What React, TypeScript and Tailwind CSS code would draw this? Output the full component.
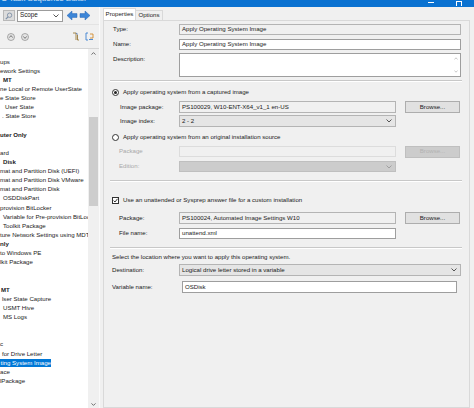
import React from 'react';

const treeRows: { t: string; x?: number; b?: boolean; sel?: boolean }[] = [
  { t: 'ups' },
  { t: 'ework Settings' },
  { t: 'MT', x: 3, b: true },
  { t: 'ne Local or Remote UserState' },
  { t: 'e State Store' },
  { t: 'User State', x: 5 },
  { t: '. State Store', x: 2 },
  { t: '' },
  { t: 'uter Only', b: true },
  { t: '' },
  { t: 'ard' },
  { t: 'Disk', x: 3, b: true },
  { t: 'mat and Partition Disk (UEFI)' },
  { t: 'mat and Partition Disk VMware' },
  { t: 'mat and Partition Disk' },
  { t: 'OSDDiskPart', x: 3 },
  { t: 'provision BitLocker' },
  { t: 'Variable for Pre-provision BitLocker', x: 3 },
  { t: 'Toolkit Package', x: 3 },
  { t: 'ture Network Settings using MDT' },
  { t: 'nly', b: true },
  { t: 'to Windows PE' },
  { t: 'lkit Package' },
  { t: '' },
  { t: '' },
  { t: 'MT', x: 1, b: true },
  { t: 'lser State Capture', x: 2 },
  { t: 'USMT Hive', x: 3 },
  { t: 'MS Logs', x: 3 },
  { t: '' },
  { t: '' },
  { t: 'c' },
  { t: ' for Drive Letter', x: 2 },
  { t: 'ting System Image', sel: true },
  { t: 'ace' },
  { t: 'lPackage' },
];

function Separator({ mt }: { mt: string }) {
  return <div className={`${mt} ml-[6px] w-[352px] h-[2px] border-t border-[#c8c8c8] border-b border-b-white`} />;
}

function Chevron({ light }: { light?: boolean }) {
  return (
    <svg width="6" height="4" viewBox="0 0 6 4" className="shrink-0">
      <path d="M0.5 0.5 L3 3 L5.5 0.5" fill="none" stroke={light ? '#9a9a9a' : '#444'} strokeWidth="0.9" />
    </svg>
  );
}

export default function App() {
  return (
    <div className="w-[474px] h-[408px] overflow-hidden bg-[#f0f0f0] font-['Liberation_Sans',Arial,sans-serif] text-[6.1px] text-[#1a1a1a] leading-none">
      {/* Title bar */}
      <div className="h-[7px] bg-[#0a72d1] flex overflow-hidden">
        <div className="-mt-[5px] ml-[2px] text-[8px] text-white/80 whitespace-nowrap">■ Task Sequence Editor</div>
        <div className="ml-auto flex items-start gap-[22px] mr-[12px] mt-[1px]">
          <div className="w-[6px] h-[1px] bg-white mt-[1px]" />
          <div className="w-[6px] h-[5px] border border-white border-b-0" />
        </div>
      </div>

      <div className="flex h-[401px]">
        {/* Left panel */}
        <div className="w-[99px] flex flex-col">
          <div className="h-[18px] flex items-center pl-[3px] border-b border-[#e3e3e3]">
            <div className="w-[12px] h-[11px] bg-[#dcdcdc] border border-[#b8b8b8] flex items-center justify-center">
              <svg width="8" height="8" viewBox="0 0 8 8">
                <circle cx="4.6" cy="3.2" r="2.2" fill="none" stroke="#7d8fa6" strokeWidth="0.9" />
                <path d="M3 4.8 L0.8 7.2" stroke="#7d8fa6" strokeWidth="1.1" />
              </svg>
            </div>
            <div className="ml-[2px] w-[46px] h-[12px] bg-white border border-[#9c9c9c] flex items-center pl-[2px] pr-[3px]">
              <span className="text-[6.3px]">Scope</span>
              <div className="ml-auto">
                <Chevron />
              </div>
            </div>
            <svg width="12" height="11" viewBox="0 0 12 11" className="ml-[3px]">
              <path d="M1 5.5 L6 1 V3.6 H11 V7.4 H6 V10 Z" fill="#3d86d8" stroke="#2a67b4" strokeWidth="0.5" />
            </svg>
            <svg width="12" height="11" viewBox="0 0 12 11" className="ml-[1px]">
              <path d="M11 5.5 L6 1 V3.6 H1 V7.4 H6 V10 Z" fill="#3d86d8" stroke="#2a67b4" strokeWidth="0.5" />
            </svg>
          </div>
          <div className="h-[24px] flex items-center pl-[7px] pr-[5px] border-b border-[#d5d5d5]">
            <svg width="8" height="8" viewBox="0 0 8 8">
              <circle cx="4" cy="4" r="3.5" fill="#e4e4e4" stroke="#8a8a8a" strokeWidth="0.7" />
              <path d="M2.3 4.6 L4 2.6 L5.7 4.6" fill="none" stroke="#6a6a6a" strokeWidth="0.9" />
            </svg>
            <svg width="8" height="8" viewBox="0 0 8 8" className="ml-[6px]">
              <circle cx="4" cy="4" r="3.5" fill="#e4e4e4" stroke="#8a8a8a" strokeWidth="0.7" />
              <path d="M2.3 3.4 L4 5.4 L5.7 3.4" fill="none" stroke="#6a6a6a" strokeWidth="0.9" />
            </svg>
            <svg width="8" height="9" viewBox="0 0 8 9" className="ml-auto">
              <path d="M1 1 H4 V8 M5.5 3 V8 H7" fill="none" stroke="#9a7a3a" strokeWidth="0.9" />
              <path d="M4 1 L6 2.5" stroke="#4a74b8" strokeWidth="0.8" />
            </svg>
            <svg width="9" height="9" viewBox="0 0 9 9" className="ml-[5px]">
              <path d="M3 1 H1 V8 H3" fill="none" stroke="#3b7fd0" strokeWidth="0.9" />
              <path d="M5 2 H8 V6 H5" fill="none" stroke="#d28a2a" strokeWidth="0.9" />
              <path d="M4 7.5 H8" stroke="#3b7fd0" strokeWidth="0.9" />
            </svg>
          </div>
          <div className="flex flex-1 bg-white min-h-0">
            <div className="w-[88px] overflow-hidden pt-[8px]">
              {treeRows.map((r, i) => (
                <div key={i} className="h-[9.14px] flex items-center whitespace-nowrap" style={{ paddingLeft: r.x ?? 0 }}>
                  {r.sel ? (
                    <span className="bg-[#0078d7] text-white px-[0.5px] py-[1px]">{r.t}</span>
                  ) : (
                    <span className={r.b ? 'font-bold' : ''}>{r.t}</span>
                  )}
                </div>
              ))}
            </div>
            <div className="w-[10px] bg-[#f0f0f0] flex flex-col items-center">
              <div className="h-[8px] flex items-center">
                <svg width="5" height="3" viewBox="0 0 5 3">
                  <path d="M0.5 2.6 L2.5 0.6 L4.5 2.6" fill="none" stroke="#606060" strokeWidth="0.9" />
                </svg>
              </div>
              <div className="mt-[60px] w-[9px] h-[89px] bg-[#cdcdcd]" />
              <div className="mt-auto h-[8px] flex items-center">
                <svg width="5" height="3" viewBox="0 0 5 3">
                  <path d="M0.5 0.4 L2.5 2.4 L4.5 0.4" fill="none" stroke="#606060" strokeWidth="0.9" />
                </svg>
              </div>
            </div>
            <div className="w-[1px] bg-[#f0f0f0]" />
          </div>
        </div>

        {/* Splitter */}
        <div className="w-[4px] bg-[#f0f0f0] border-l border-[#fafafa]" />

        {/* Right panel */}
        <div className="w-[371px] flex flex-col">
          <div className="h-[13px] flex items-end">
            <div className="h-[12px] w-[33px] bg-white border border-[#d9d9d9] border-b-0 flex items-center justify-center text-[6.1px]">
              Properties
            </div>
            <div className="h-[10px] w-[27px] border-t border-r border-[#d9d9d9] flex items-center justify-center text-[6.1px]">
              Options
            </div>
          </div>
          <div className="w-[367px] flex-1 border border-[#d9d9d9] bg-[#f0f0f0] flex flex-col">
            {/* Type */}
            <div className="mt-[3px] h-[11px] flex items-center">
              <span className="w-[75px] pl-[9px]">Type:</span>
              <div className="w-[282px] h-[11px] bg-[#f0f0f0] border border-[#b4b4b4] flex items-center pl-[2px]">
                Apply Operating System Image
              </div>
            </div>
            {/* Name */}
            <div className="mt-[4px] h-[11px] flex items-center">
              <span className="w-[75px] pl-[9px]">Name:</span>
              <div className="w-[282px] h-[11px] bg-white border border-[#9e9e9e] flex items-center pl-[2px]">
                Apply Operating System Image
              </div>
            </div>
            {/* Description */}
            <div className="mt-[3px] h-[24px] flex items-start">
              <span className="w-[75px] pl-[9px] pt-[3px]">Description:</span>
              <div className="w-[282px] h-[24px] bg-white border border-[#9e9e9e] flex justify-end pr-[1px]">
                <div className="w-[7px] flex flex-col items-center justify-between py-[3px]">
                  <svg width="4" height="3" viewBox="0 0 4 3">
                    <path d="M0.4 2.5 L2 0.8 L3.6 2.5" fill="none" stroke="#b0b0b0" strokeWidth="0.7" />
                  </svg>
                  <svg width="4" height="3" viewBox="0 0 4 3">
                    <path d="M0.4 0.5 L2 2.2 L3.6 0.5" fill="none" stroke="#b0b0b0" strokeWidth="0.7" />
                  </svg>
                </div>
              </div>
            </div>
            <Separator mt="mt-[3px]" />

            {/* Radio 1 */}
            <div className="mt-[5px] h-[10px] flex items-center pl-[8px]">
              <div className="w-[7px] h-[7px] rounded-full border border-[#333] bg-white flex items-center justify-center">
                <div className="w-[3px] h-[3px] rounded-full bg-[#222]" />
              </div>
              <span className="ml-[4px]">Apply operating system from a captured image</span>
            </div>
            <div className="mt-[4px] h-[12px] flex items-center">
              <span className="w-[75px] pl-[16px]">Image package:</span>
              <div className="w-[217px] h-[12px] bg-[#f0f0f0] border border-[#b4b4b4] flex items-center pl-[2px]">
                PS100029, W10-ENT-X64_v1_1 en-US
              </div>
              <div className="ml-[9px] w-[55px] h-[12px] bg-[#e1e1e1] border border-[#adadad] flex items-center justify-center">
                Browse...
              </div>
            </div>
            <div className="mt-[2px] h-[12px] flex items-center">
              <span className="w-[75px] pl-[16px]">Image index:</span>
              <div className="w-[217px] h-[12px] bg-[#e5e5e5] border border-[#b4b4b4] flex items-center pl-[2px] pr-[3px]">
                <span>2 - 2</span>
                <div className="ml-auto">
                  <Chevron />
                </div>
              </div>
            </div>

            {/* Radio 2 */}
            <div className="mt-[5px] h-[10px] flex items-center pl-[8px]">
              <div className="w-[7px] h-[7px] rounded-full border border-[#333] bg-white" />
              <span className="ml-[4px]">Apply operating system from an original installation source</span>
            </div>
            <div className="mt-[4px] h-[11px] flex items-center text-[#a8a8a8]">
              <span className="w-[75px] pl-[15px]">Package</span>
              <div className="w-[217px] h-[11px] bg-[#f0f0f0] border border-[#dcdcdc]" />
              <div className="ml-[9px] w-[55px] h-[12px] bg-[#cccccc] border border-[#bfbfbf] flex items-center justify-center text-[#b2b2b2]">
                Browse...
              </div>
            </div>
            <div className="mt-[4px] h-[11px] flex items-center text-[#a8a8a8]">
              <span className="w-[75px] pl-[15px]">Edition:</span>
              <div className="w-[217px] h-[11px] bg-[#cccccc] border border-[#bfbfbf] flex items-center pr-[3px]">
                <div className="ml-auto">
                  <Chevron light />
                </div>
              </div>
            </div>
            <Separator mt="mt-[8px]" />

            {/* Checkbox */}
            <div className="mt-[13px] h-[10px] flex items-center pl-[8px]">
              <div className="w-[7px] h-[7px] border border-[#333] bg-white flex items-center justify-center">
                <svg width="5" height="5" viewBox="0 0 5 5">
                  <path d="M0.6 2.6 L2 4 L4.5 0.8" fill="none" stroke="#222" strokeWidth="0.9" />
                </svg>
              </div>
              <span className="ml-[4px]">Use an unattended or Sysprep answer file for a custom installation</span>
            </div>
            <div className="mt-[7px] h-[12px] flex items-center">
              <span className="w-[75px] pl-[15px]">Package:</span>
              <div className="w-[217px] h-[12px] bg-[#f0f0f0] border border-[#b4b4b4] flex items-center pl-[2px]">
                PS100024, Automated Image Settings W10
              </div>
              <div className="ml-[9px] w-[55px] h-[12px] bg-[#e1e1e1] border border-[#adadad] flex items-center justify-center">
                Browse...
              </div>
            </div>
            <div className="mt-[4px] h-[11px] flex items-center">
              <span className="w-[75px] pl-[15px]">File name:</span>
              <div className="w-[217px] h-[11px] bg-white border border-[#9e9e9e] flex items-center pl-[2px]">
                unattend.xml
              </div>
            </div>
            <Separator mt="mt-[8px]" />

            <div className="mt-[4px] h-[9px] flex items-center pl-[8px]">
              Select the location where you want to apply this operating system.
            </div>
            <div className="mt-[2px] h-[12px] flex items-center">
              <span className="w-[75px] pl-[8px]">Destination:</span>
              <div className="w-[282px] h-[12px] bg-[#e5e5e5] border border-[#b4b4b4] flex items-center pl-[2px] pr-[3px]">
                <span>Logical drive letter stored in a variable</span>
                <div className="ml-auto">
                  <Chevron />
                </div>
              </div>
            </div>
            <div className="mt-[5px] h-[12px] flex items-center">
              <span className="w-[78px] pl-[8px]">Variable name:</span>
              <div className="w-[275px] h-[12px] bg-white border border-[#9e9e9e] flex items-center pl-[2px]">
                OSDisk
              </div>
            </div>
          </div>
        </div>
      </div>
    </div>
  );
}
